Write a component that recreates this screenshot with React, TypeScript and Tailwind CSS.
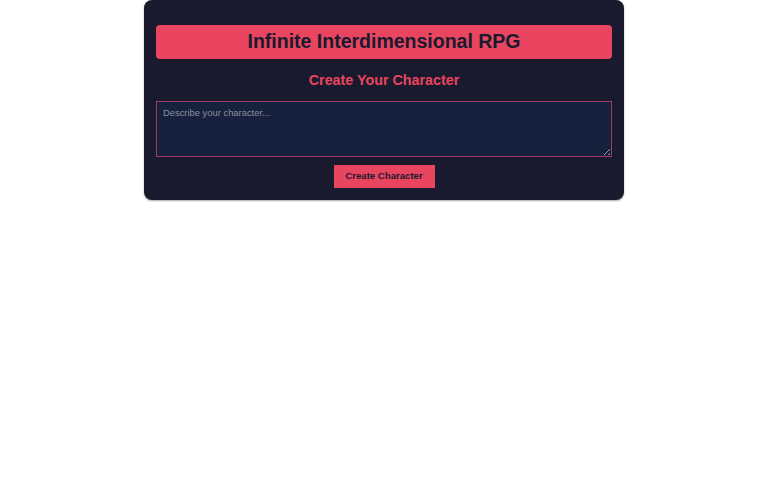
export default function App() {
  return (
    <div className="min-h-screen bg-white" style={{ fontFamily: '"Liberation Sans", Arial, sans-serif' }}>
      <div className="mx-auto w-[480px] rounded-lg bg-[#1a1a2e] px-3 pb-3 pt-[25px] shadow-[0_1px_2px_rgba(0,0,0,0.35)]">
        <h1 className="flex h-[34px] items-center justify-center rounded bg-[#e94560] pb-[1px] text-[19.5px] font-bold text-[#1a1a2e]">
          Infinite Interdimensional RPG
        </h1>
        <h2 className="mt-[12px] text-center text-[14.3px] font-bold leading-[18px] text-[#e94560]">
          Create Your Character
        </h2>
        <textarea
          className="mt-[12px] block h-[56px] w-full border border-[#a23a66] bg-[#16213e] px-[6px] py-[4px] text-[9.4px] leading-[14px] text-gray-300 placeholder:text-[#8a8f9c] focus:outline-none"
          placeholder="Describe your character..."
        />
        <div className="mt-[8px] flex justify-center">
          <button className="h-[23px] w-[101px] bg-[#e94560] text-[9.6px] font-bold text-[#1a1a2e]">
            Create Character
          </button>
        </div>
      </div>
    </div>
  );
}
